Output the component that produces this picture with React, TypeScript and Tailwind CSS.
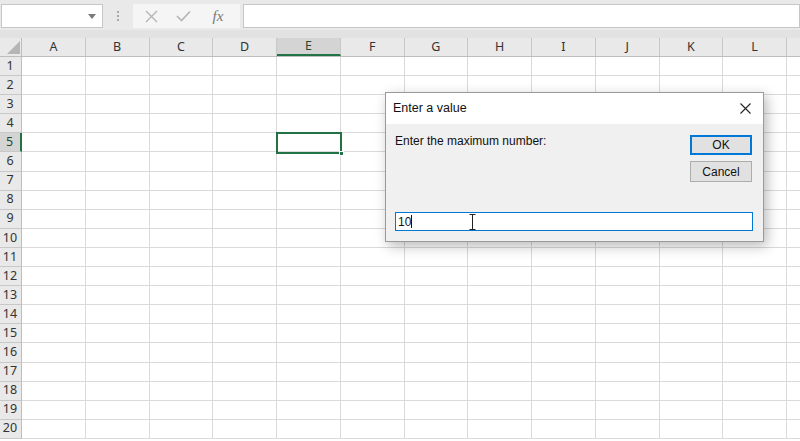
import React from "react";

const COLS = ["A", "B", "C", "D", "E", "F", "G", "H", "I", "J", "K", "L"];
const ROWS = Array.from({ length: 20 }, (_, i) => i + 1);

export default function App() {
  return (
    <div className="relative w-[800px] h-[441px] overflow-hidden bg-white font-['Noto_Sans','Liberation_Sans',sans-serif] text-[#222]">
      {/* Formula bar */}
      <div className="h-[30px] bg-[#e9e9e9] flex items-start pt-[4px]">
        <div className="ml-[1px] w-[102px] h-[24px] bg-white border border-[#c6c6c6] flex items-center justify-end pr-[6px]">
          <svg width="8" height="5" viewBox="0 0 8 5">
            <path d="M0 0 L8 0 L4 5 Z" fill="#7a7a7a" />
          </svg>
        </div>
        <div className="w-[30px] h-[24px] flex flex-col items-center justify-center gap-[2px]">
          <div className="w-[2px] h-[2px] bg-[#a8a8a8]" />
          <div className="w-[2px] h-[2px] bg-[#a8a8a8]" />
          <div className="w-[2px] h-[2px] bg-[#a8a8a8]" />
        </div>
        <div className="w-[107px] h-[24px] bg-[#f5f5f5] flex items-center">
          <div className="w-[34px] flex justify-center ml-[1px]">
            <svg width="13" height="13" viewBox="0 0 13 13">
              <path d="M1 1 L12 12 M12 1 L1 12" stroke="#b4b4b4" strokeWidth="1.3" />
            </svg>
          </div>
          <div className="w-[30px] flex justify-center">
            <svg width="15" height="12" viewBox="0 0 15 12">
              <path d="M1 6 L5.5 10.5 L14 1.5" stroke="#b4b4b4" strokeWidth="1.6" fill="none" />
            </svg>
          </div>
          <div className="w-[40px] flex justify-center">
            <span className="font-['Liberation_Serif',serif] italic text-[15px] text-[#777] leading-none">fx</span>
          </div>
        </div>
        <div className="ml-[3px] flex-1 h-[24px] bg-white border border-[#c6c6c6]" />
      </div>
      <div className="h-[8px] bg-[#e2e2e2]" />

      {/* Column headers */}
      <div className="flex h-[19px] bg-[#e9e9e9] border-b border-[#bdbdbd]">
        <div className="w-[22px] shrink-0 relative border-r border-[#bdbdbd]">
          <svg className="absolute left-[7px] top-[3px]" width="13" height="13" viewBox="0 0 13 13">
            <path d="M13 0 L13 13 L0 13 Z" fill="#b5b5b5" />
          </svg>
        </div>
        {COLS.map((c) => (
          <div
            key={c}
            className={
              c === "E"
                ? "w-[63.75px] shrink-0 flex items-center justify-center text-[12.5px] border-r border-[#c8c8c8] bg-[#d4d4d4] border-b-2 border-b-[#217346] text-[#1e4a30]"
                : "w-[63.75px] shrink-0 flex items-center justify-center text-[12.5px] border-r border-[#c8c8c8] text-[#333]"
            }
          >
            {c}
          </div>
        ))}
        <div className="flex-1" />
      </div>

      {/* Rows */}
      {ROWS.map((r) => (
        <div key={r} className="flex h-[19.1px]">
          <div
            className={
              r === 5
                ? "w-[22px] shrink-0 bg-[#d4d4d4] border-b border-[#c8c8c8] border-r-2 border-r-[#217346] flex items-center justify-center text-[12.5px] text-[#1e4a30] pr-[1px]"
                : "w-[22px] shrink-0 bg-[#e9e9e9] border-b border-[#c8c8c8] border-r border-r-[#bdbdbd] flex items-center justify-center text-[12.5px] text-[#333] pr-[1px]"
            }
          >
            {r}
          </div>
          {COLS.map((c) => (
            <div key={c} className="w-[63.75px] shrink-0 border-r border-b border-[#dadada]" />
          ))}
          <div className="flex-1 border-b border-[#dadada]" />
        </div>
      ))}

      {/* Selected cell */}
      <div className="absolute left-[276px] top-[132px] w-[66px] h-[22px] border-2 border-[#217346]" />
      <div className="absolute left-[339px] top-[151px] w-[5px] h-[5px] bg-[#217346] border border-white" />

      {/* Dialog */}
      <div className="absolute left-[385px] top-[92px] w-[379px] h-[150px] bg-[#f0f0f0] border border-[#9a9a9a] shadow-[3px_4px_12px_rgba(0,0,0,0.28)] flex flex-col font-['Liberation_Sans',sans-serif]">
        <div className="h-[31px] bg-white flex items-center justify-between pl-[7px] pr-[12px]">
          <span className="text-[12.5px] text-[#111]">Enter a value</span>
          <svg width="11" height="11" viewBox="0 0 11 11">
            <path d="M0.5 0.5 L10.5 10.5 M10.5 0.5 L0.5 10.5" stroke="#222" strokeWidth="1.1" />
          </svg>
        </div>
        <div className="flex-1 relative px-[9px]">
          <div className="flex justify-between pt-[8px]">
            <span className="text-[12px] text-[#111] leading-[18px]">Enter the maximum number:</span>
            <div className="flex flex-col gap-[6px] mt-[3px] mr-[2px]">
              <div className="w-[62px] h-[20px] bg-[#e1e1e1] border-2 border-[#0078d7] flex items-center justify-center text-[12px] text-[#111]">
                OK
              </div>
              <div className="w-[62px] h-[21px] bg-[#e1e1e1] border border-[#adadad] flex items-center justify-center text-[12px] text-[#111]">
                Cancel
              </div>
            </div>
          </div>
          <div className="absolute left-[9px] right-[10px] top-[88px] h-[19px] bg-white border border-[#0078d7] flex items-center pl-[2px]">
            <span className="text-[12px] text-[#111] leading-none">10</span>
            <div className="w-[1px] h-[13px] bg-[#111]" />
            <svg className="absolute left-[73px] top-[1px]" width="7" height="16" viewBox="0 0 7 16">
              <path d="M0.5 0.5 H6.5 M3.5 0.5 V15.5 M0.5 15.5 H6.5" stroke="#222" strokeWidth="1" fill="none" />
            </svg>
          </div>
        </div>
      </div>
    </div>
  );
}
